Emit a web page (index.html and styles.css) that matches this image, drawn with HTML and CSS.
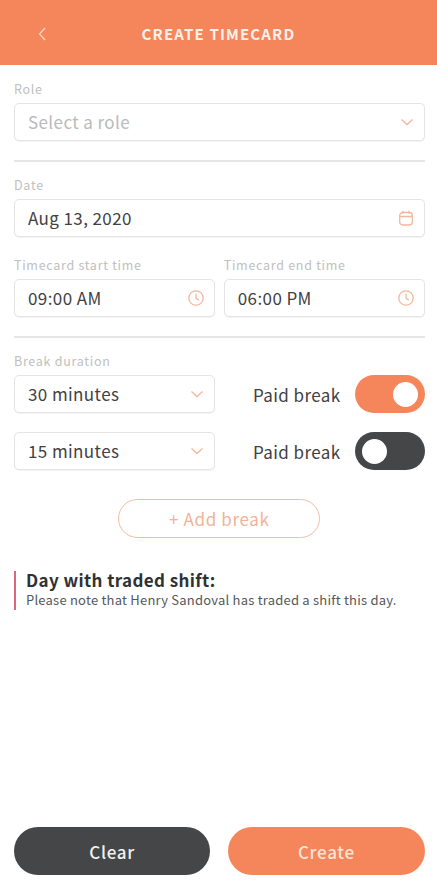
FILE: index.html
```html
<!DOCTYPE html>
<html lang="en">
<head>
<meta charset="utf-8">
<title>Create timecard</title>
<link rel="stylesheet" href="styles.css">
</head>
<body>
<div class="app">
  <header class="topbar">
    <svg class="back" width="10" height="16" viewBox="0 0 10 16"><path d="M8 2 2.500 8 8 14"/></svg>
    <h1>CREATE TIMECARD</h1>
  </header>
  <main class="form">
    <section class="group">
      <div class="label">Role</div>
      <div class="field"><span class="placeholder">Select a role</span>
        <svg class="icon" width="14" height="14" viewBox="0 0 14 14"><path d="M1.500 4.500 7 9.500l5.500-5"/></svg></div>
    </section>
    <hr class="rule rule-role">
    <section class="group">
      <div class="label">Date</div>
      <div class="field"><span>Aug 13, 2020</span>
        <svg class="icon" width="16" height="16" viewBox="0 0 16 16"><rect x="1.700" y="2.500" width="12.600" height="12.500" rx="3"/><path d="M1.700 6.500h12.600M5 .8v3M11 .8v3"/></svg></div>
    </section>
    <section class="row row-times">
      <div class="group">
        <div class="label">Timecard start time</div>
        <div class="field"><span>09:00 AM</span>
          <svg class="icon" width="16" height="16" viewBox="0 0 16 16"><circle cx="8" cy="8" r="7.200"/><path d="M8 3.800v4.500l2.800 1.800"/></svg></div>
      </div>
      <div class="group">
        <div class="label">Timecard end time</div>
        <div class="field"><span>06:00 PM</span>
          <svg class="icon" width="16" height="16" viewBox="0 0 16 16"><circle cx="8" cy="8" r="7.200"/><path d="M8 3.800v4.500l2.800 1.800"/></svg></div>
      </div>
    </section>
    <hr class="rule rule-times">
    <section class="group">
      <div class="label">Break duration</div>
      <div class="row">
        <div class="field"><span>30 minutes</span>
          <svg class="icon" width="14" height="14" viewBox="0 0 14 14"><path d="M1.500 4.500 7 9.500l5.500-5"/></svg></div>
        <div class="paid"><span>Paid break</span><div class="toggle on"><i></i></div></div>
      </div>
      <div class="row row-break2">
        <div class="field"><span>15 minutes</span>
          <svg class="icon" width="14" height="14" viewBox="0 0 14 14"><path d="M1.500 4.500 7 9.500l5.500-5"/></svg></div>
        <div class="paid"><span>Paid break</span><div class="toggle off"><i></i></div></div>
      </div>
    </section>
    <div class="add-wrap"><button class="add">+ Add break</button></div>
    <aside class="notice">
      <strong>Day with traded shift:</strong>
      <p>Please note that Henry Sandoval has traded a shift this day.</p>
    </aside>
  </main>
  <footer class="actions">
    <button class="btn dark">Clear</button>
    <button class="btn accent">Create</button>
  </footer>
</div>
</body>
</html>
```
FILE: styles.css
```css
* { box-sizing: border-box; }
html, body { margin: 0; height: 100%; }
body { background: #fff; font-family: "Noto Sans CJK JP", "Noto Sans", sans-serif; color: #3f4143; }
.app { width: 437px; height: 887px; display: flex; flex-direction: column; overflow: hidden; }

.topbar { height: 65px; flex: none; background: #f5865c; position: relative; display: flex; align-items: center; justify-content: center; }
.topbar h1 { margin: 2px 0 0; font-size: 15px; line-height: 20px; font-weight: 700; letter-spacing: 1.150px; color: #fdf1ea; }
.back { position: absolute; left: 37px; top: 26px; fill: none; stroke: #fbd3c0; stroke-width: 1.300; }

.form { flex: 1; padding: 16px 12.500px 0 14px; display: flex; flex-direction: column; }
.label { font-size: 12.500px; line-height: 16px; height: 16px; letter-spacing: 0.720px; color: #bfc0c1; margin-bottom: 6px; }
.field { height: 37.500px; border: 1px solid #e4e4e6; border-radius: 5px; background: #fff; box-shadow: 0 1px 1px rgba(0,0,0,.05); display: flex; align-items: center; justify-content: space-between; padding: 0 10px 0 13px; font-size: 17px; letter-spacing: 0.400px; }
.placeholder { color: #b9babb; }
.icon { fill: none; stroke: #f3b79e; stroke-width: 1.300; flex: none; }

.rule { border: 0; height: 1.500px; margin: 0; background: #e6e6e8; }
.rule-role { margin: 19.500px 0 15.500px; }
.rule-times { margin: 19.500px 0 15.500px; }

.row { display: grid; grid-template-columns: 1fr 1fr; column-gap: 9px; align-items: start; }
.row-times { margin-top: 20.500px; }
.row-break2 { margin-top: 19px; }

.paid { display: flex; align-items: center; justify-content: flex-end; gap: 14px; font-size: 17px; letter-spacing: 0.400px; }
.toggle { width: 70px; height: 38px; border-radius: 19px; position: relative; flex: none; }
.toggle i { position: absolute; top: 6.500px; width: 25px; height: 25px; border-radius: 50%; background: #fff; }
.toggle.on { background: #f5865c; }
.toggle.on i { right: 7px; }
.toggle.off { background: #444648; }
.toggle.off i { left: 7px; }

.add-wrap { display: flex; justify-content: center; margin-top: 29px; }
.add { width: 202px; height: 38.500px; border: 1.500px solid #f4bca5; border-radius: 20px; background: #fff; color: #f1b298; font: inherit; font-size: 17px; letter-spacing: 0.650px; padding: 0; }

.notice { margin-top: 33.500px; height: 38.500px; border-left: 2px solid #d9697f; padding-left: 10px; }
.notice strong { display: block; font-size: 17px; line-height: 18px; font-weight: 700; letter-spacing: 0.400px; color: #2f3133; }
.notice p { margin: 2px 0 0; font-size: 13px; line-height: 17px; letter-spacing: 0.220px; color: #55575a; }

.actions { flex: none; display: flex; gap: 18px; padding: 0 12.500px 12px 14px; }
.btn { flex: 1 1 0; height: 48px; border: 0; border-radius: 24px; font: inherit; font-size: 17px; font-weight: 500; letter-spacing: 0.700px; }
.btn.dark { background: #444648; color: #f1f1f1; }
.btn.accent { background: #f5865c; color: #fde5d8; }
```
